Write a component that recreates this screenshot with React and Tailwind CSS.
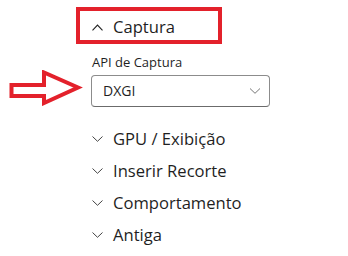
import React from "react";

const ChevronDown = ({ w = 11, h = 6, color = "#444" }) => (
  <svg width={w} height={h} viewBox="0 0 11 6" fill="none">
    <path d="M0.5 0.5 L5.5 5.3 L10.5 0.5" stroke={color} strokeWidth="1" />
  </svg>
);

const ChevronUp = () => (
  <svg width="11" height="7" viewBox="0 0 11 7" fill="none">
    <path d="M0.5 6.3 L5.5 1 L10.5 6.3" stroke="#222" strokeWidth="1.1" />
  </svg>
);

const Arrow = () => (
  <svg width="74" height="36" viewBox="0 0 74 36" fill="none">
    <path
      d="M2.5 15 L35 15 L35 2.5 L69 17.5 L35 33 L35 26 L2.5 26 Z"
      stroke="#e3212b"
      strokeWidth="4"
      strokeLinejoin="miter"
      fill="white"
    />
  </svg>
);

const items = ["GPU / Exibição", "Inserir Recorte", "Comportamento", "Antiga"];

export default function App() {
  return (
    <div
      className="w-[348px] h-[256px] bg-white text-[#1f1f1f] overflow-hidden"
      style={{ fontFamily: '"Open Sans", "Noto Sans", sans-serif' }}
    >
      <div className="pt-[7px] pl-[76px]">
        <div className="w-[146px] h-[37px] border-4 border-[#e3212b] flex items-center pl-[12px] pt-[3px] gap-[10px]">
          <ChevronUp />
          <span className="text-[16.6px] leading-none">Captura</span>
        </div>
      </div>

      <div className="pl-[92px] mt-[10px] text-[13px] leading-[16px]">API de Captura</div>

      <div className="flex items-start pl-[9px] gap-[8px]">
        <Arrow />
        <div className="mt-[5px] w-[179px] h-[32px] border border-[#8c8c8c] border-b-[#6b6b6b] rounded-[4px] flex items-center justify-between pl-[11px] pr-[8px]">
          <span className="text-[14px] leading-none">DXGI</span>
          <ChevronDown w={12} h={6} color="#777" />
        </div>
      </div>

      <div className="mt-[16px] pl-[92px] flex flex-col">
        {items.map((t) => (
          <div key={t} className="h-[32px] flex items-center gap-[10px]">
            <ChevronDown />
            <span className="text-[16.6px] leading-none">{t}</span>
          </div>
        ))}
      </div>
    </div>
  );
}
